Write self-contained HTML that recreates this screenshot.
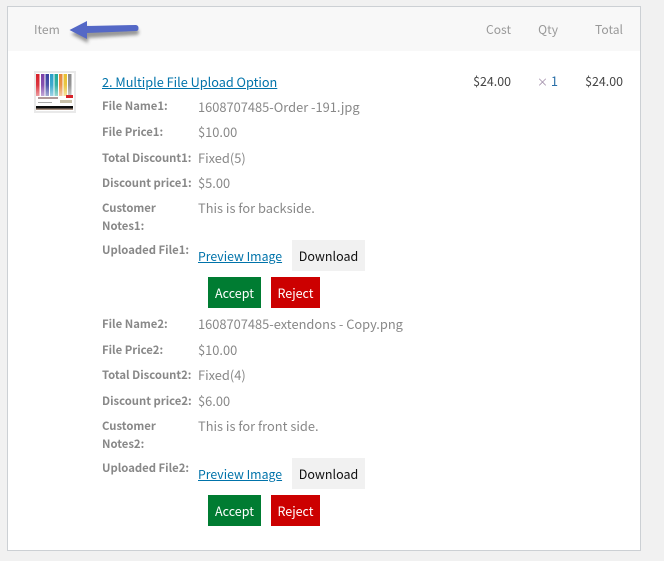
<!DOCTYPE html>
<html>
<head>
<meta charset="utf-8">
<style>
html,body{margin:0;padding:0;}
body{width:664px;height:561px;overflow:hidden;background:#f1f1f1;position:relative;font-family:"Noto Sans CJK JP","Liberation Sans",sans-serif;font-size:12.85px;color:#888;}
#panel{position:absolute;left:7px;top:6px;width:632px;height:543px;background:#fff;border:1px solid #ccd0d4;}
#head{position:absolute;left:8px;top:7px;width:632px;height:44px;background:#f8f8f8;}
.t{position:absolute;white-space:nowrap;line-height:20px;height:20px;}
.l{font-weight:700;font-size:11.3px;color:#888;left:102px;}
.v{left:198px;color:#888;}
.h{color:#999;font-size:12.1px;}
.r{text-align:right;}
a{color:#0073aa;text-decoration:underline;}
.b{position:absolute;height:31px;line-height:31px;text-align:center;font-size:12.5px;}
.d{left:292px;width:73px;background:#f1f1f1;color:#111;}
.a{left:208px;width:53px;background:#007c32;color:#fff;}
.x{left:271px;width:49px;background:#cc0000;color:#fff;}
svg{position:absolute;}
</style>
</head>
<body>
<div id="panel"></div>
<div id="head"></div>

<div class="t h" style="left:34px;top:20px;">Item</div>
<svg style="left:60px;top:14px;" width="90" height="36" viewBox="0 0 90 36">
<defs><filter id="f" x="-20%" y="-50%" width="140%" height="200%"><feGaussianBlur stdDeviation="1.6"/></filter></defs>
<path d="M11 17 L28 9 L28 13 L76 12 Q79 12.500 79 15 Q79 18 76 18 L28 21 L28 26 Z" fill="#555" opacity=".6" filter="url(#f)" transform="translate(0 3)"/>
<path d="M9.500 16 L27 7 L27 12 L76 11 Q78.500 11.500 78.500 14 Q78.500 17 76 17 L27 19 L27 25 Z" fill="#5468c6"/>
</svg>

<div class="t h r" style="right:153px;top:20px;">Cost</div>
<div class="t h r" style="right:106px;top:20px;">Qty</div>
<div class="t h r" style="right:41px;top:20px;">Total</div>

<svg style="left:34px;top:71px;" width="42" height="42" viewBox="0 0 42 42">
<defs>
<filter id="s" x="0" y="0" width="100%" height="100%"><feGaussianBlur stdDeviation=".35"/></filter>
<linearGradient id="g" x1="0" y1="0" x2="0" y2="1"><stop offset="0" stop-color="#fff" stop-opacity="0"/><stop offset=".5" stop-color="#fff" stop-opacity=".1"/><stop offset="1" stop-color="#fff" stop-opacity=".55"/></linearGradient>
</defs>
<rect width="42" height="42" fill="#e9e9e9"/>
<rect x="2" y="2" width="38" height="38" fill="#fff"/>
<g filter="url(#s)">
<rect x="2" y="3" width="3.500" height="22" fill="#d8202a"/>
<rect x="7" y="3" width="3.500" height="22" fill="#7a3fa8"/>
<rect x="11.500" y="3" width="3.500" height="22" fill="#3a3fa0"/>
<rect x="16" y="3" width="3.500" height="22" fill="#2aa0c8"/>
<rect x="20.500" y="3" width="3.500" height="22" fill="#20a898"/>
<rect x="25" y="3" width="3.500" height="22" fill="#e88838"/>
<rect x="29.500" y="3" width="3.500" height="22" fill="#e8c030"/>
<rect x="34" y="3" width="3.500" height="22" fill="#8a8a8a"/>
<rect x="2" y="3" width="37" height="22" fill="url(#g)"/>
<rect x="32" y="24" width="7" height="3" fill="#d8202a"/>
<rect x="4" y="26" width="20" height="2" fill="#b09898"/>
<rect x="26" y="29" width="12" height="3" fill="#c8c0a8"/>
<rect x="4" y="31" width="14" height="1" fill="#aaa"/>
<rect x="2" y="35" width="37" height="2.500" fill="#111"/>
<rect x="2" y="37.500" width="37" height="1.500" fill="#a89080"/>
</g>
</svg>

<div class="t" style="left:102px;top:72px;font-size:12.7px;"><a href="#">2. Multiple File Upload Option</a></div>
<div class="t r" style="right:153px;top:71px;color:#444;font-size:12.4px;">$24.00</div>
<div class="t" style="left:537px;top:72px;font-size:11px;color:#a08ca8;">×</div>
<div class="t r" style="right:106px;top:71px;color:#2a6fa8;">1</div>
<div class="t r" style="right:41px;top:71px;color:#444;font-size:12.4px;">$24.00</div>

<div class="t l" style="top:96px;">File Name1:</div><div class="t v" style="top:97px;">1608707485-Order -191.jpg</div>
<div class="t l" style="top:122px;">File Price1:</div><div class="t v" style="top:122px;">$10.00</div>
<div class="t l" style="top:148px;">Total Discount1:</div><div class="t v" style="top:148px;">Fixed(5)</div>
<div class="t l" style="top:173px;">Discount price1:</div><div class="t v" style="top:173px;">$5.00</div>
<div class="t l" style="top:198px;">Customer</div><div class="t v" style="top:198px;">This is for backside.</div>
<div class="t l" style="top:216px;">Notes1:</div>
<div class="t l" style="top:240px;">Uploaded File1:</div><div class="t v" style="top:246px;font-size:12.3px;"><a href="#">Preview Image</a></div>
<div class="b d" style="top:240px;">Download</div>
<div class="b a" style="top:277px;">Accept</div>
<div class="b x" style="top:277px;">Reject</div>

<div class="t l" style="top:314px;">File Name2:</div><div class="t v" style="top:314px;">1608707485-extendons - Copy.png</div>
<div class="t l" style="top:340px;">File Price2:</div><div class="t v" style="top:340px;">$10.00</div>
<div class="t l" style="top:365px;">Total Discount2:</div><div class="t v" style="top:365px;">Fixed(4)</div>
<div class="t l" style="top:391px;">Discount price2:</div><div class="t v" style="top:391px;">$6.00</div>
<div class="t l" style="top:416px;">Customer</div><div class="t v" style="top:416px;">This is for front side.</div>
<div class="t l" style="top:434px;">Notes2:</div>
<div class="t l" style="top:458px;">Uploaded File2:</div><div class="t v" style="top:464px;font-size:12.3px;"><a href="#">Preview Image</a></div>
<div class="b d" style="top:458px;">Download</div>
<div class="b a" style="top:495px;">Accept</div>
<div class="b x" style="top:495px;">Reject</div>
</body>
</html>
